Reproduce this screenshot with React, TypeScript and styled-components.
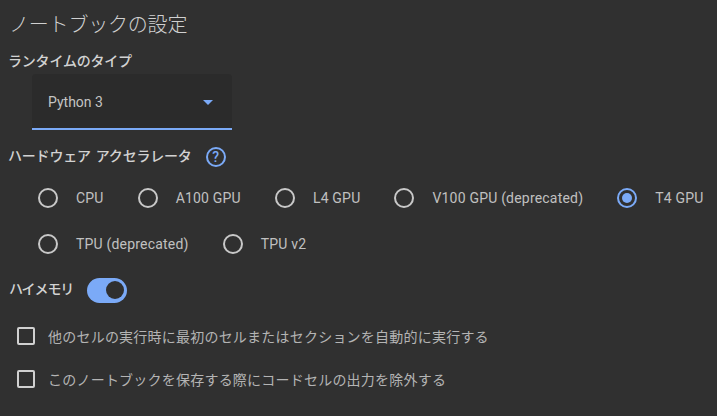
import React from "react";
import styled, { createGlobalStyle } from "styled-components";

const Global = createGlobalStyle`
  html, body { margin: 0; padding: 0; background: #303030; }
  body { font-family: Roboto, "Noto Sans CJK JP", sans-serif; overflow: hidden; }
`;

const Dialog = styled.div`
  width: 717px;
  height: 416px;
  box-sizing: border-box;
  padding: 11px 0 0 8px;
  background: #303030;
  color: #c8c8c8;
  overflow: hidden;
`;

const Title = styled.h1`
  margin: 0 0 0 1px;
  font-size: 20px;
  line-height: 26px;
  font-weight: 300;
  color: #d0d0d0;
  letter-spacing: -0.2px;
  font-family: "Noto Sans CJK JP", sans-serif;
`;

const Label = styled.div<{ $tight?: boolean }>`
  font-size: 14px;
  line-height: 20px;
  font-weight: 500;
  color: #d2d2d2;
  letter-spacing: ${(p) => (p.$tight ? "-1.1px" : "-0.2px")};
  word-spacing: 2px;
  font-family: "Noto Sans CJK JP", sans-serif;
  white-space: nowrap;
`;

const RuntimeLabel = styled(Label)`
  margin-top: 13px;
`;

const Select = styled.div`
  margin: 4px 0 0 24px;
  width: 200px;
  height: 56px;
  box-sizing: border-box;
  background: #2b2b2b;
  border-bottom: 2px solid #7baaf7;
  border-radius: 4px 4px 0 0;
  padding: 2px 19px 0 16px;
  display: flex;
  align-items: center;
  justify-content: space-between;
  font-size: 14px;
  color: #c4c4c4;
`;

const Caret = styled.span`
  width: 0;
  height: 0;
  border-left: 5px solid transparent;
  border-right: 5px solid transparent;
  border-top: 5px solid #7baaf7;
`;

const AcceleratorRow = styled.div`
  margin-top: 14px;
  display: flex;
  align-items: center;
  gap: 14px;
  height: 22px;
`;

const Help = styled.span`
  width: 16px;
  height: 16px;
  border: 2px solid #7baaf7;
  border-radius: 50%;
  display: flex;
  align-items: center;
  justify-content: center;
  color: #7baaf7;
  font-size: 14px;
  font-weight: 500;
  margin-top: 4px;
`;

const Radios = styled.div`
  margin: 20px 0 0 30px;
  display: flex;
  flex-wrap: wrap;
  row-gap: 22px;
  column-gap: 34px;
`;

const RadioItem = styled.div`
  display: flex;
  align-items: center;
  gap: 18px;
  height: 24px;
  font-size: 14px;
  color: #c0c0c0;
  letter-spacing: 0.2px;
  white-space: nowrap;
`;

const RadioRing = styled.span<{ $on?: boolean }>`
  width: 16px;
  height: 16px;
  border: 2px solid ${(p) => (p.$on ? "#7baaf7" : "#c8c8c8")};
  border-radius: 50%;
  display: flex;
  align-items: center;
  justify-content: center;
  &::after {
    content: "";
    width: 10px;
    height: 10px;
    border-radius: 50%;
    background: ${(p) => (p.$on ? "#7baaf7" : "transparent")};
  }
`;

const SwitchRow = styled.div`
  margin-top: 22px;
  display: flex;
  align-items: center;
  gap: 14px;
  height: 24px;
`;

const SwitchLabel = styled(Label)`
  margin: 0 0 4px 1px;
`;

const Track = styled.span`
  width: 40px;
  height: 25px;
  border-radius: 13px;
  background: #7baaf7;
  display: flex;
  align-items: center;
  justify-content: flex-end;
  padding-right: 3px;
  box-sizing: border-box;
`;

const Thumb = styled.span`
  width: 18px;
  height: 18px;
  border-radius: 50%;
  background: #303030;
`;

const Checks = styled.div`
  margin: 23px 0 0 9px;
  display: flex;
  flex-direction: column;
  gap: 21px;
`;

const CheckRow = styled.div`
  display: flex;
  align-items: center;
  gap: 13px;
  height: 22px;
  font-size: 14px;
  letter-spacing: 0.22px;
  color: #b4b4b4;
  font-family: "Noto Sans CJK JP", sans-serif;
  white-space: nowrap;
`;

const Box = styled.span`
  width: 14px;
  height: 14px;
  border: 2px solid #d0d0d0;
  border-radius: 2px;
`;

const row = [
  ["CPU"],
  ["A100 GPU"],
  ["L4 GPU"],
  ["V100 GPU (deprecated)"],
  ["T4 GPU", true],
  ["TPU (deprecated)"],
  ["TPU v2"],
] as [string, boolean?][];

export default function App() {
  return (
    <Dialog>
      <Global />
      <Title>ノートブックの設定</Title>
      <RuntimeLabel>ランタイムのタイプ</RuntimeLabel>
      <Select>
        Python 3
        <Caret />
      </Select>
      <AcceleratorRow>
        <Label>ハードウェア アクセラレータ</Label>
        <Help>?</Help>
      </AcceleratorRow>
      <Radios>
        {row.map(([name, on]) => (
          <RadioItem key={name}>
            <RadioRing $on={on} />
            {name}
          </RadioItem>
        ))}
      </Radios>
      <SwitchRow>
        <SwitchLabel $tight>ハイメモリ</SwitchLabel>
        <Track>
          <Thumb />
        </Track>
      </SwitchRow>
      <Checks>
        <CheckRow>
          <Box />
          他のセルの実行時に最初のセルまたはセクションを自動的に実行する
        </CheckRow>
        <CheckRow>
          <Box />
          このノートブックを保存する際にコードセルの出力を除外する
        </CheckRow>
      </Checks>
    </Dialog>
  );
}
